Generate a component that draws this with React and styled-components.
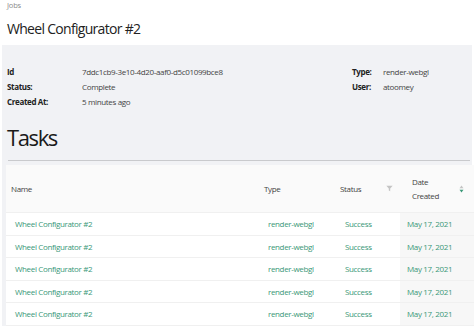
import React from "react";
import styled, { createGlobalStyle } from "styled-components";

const Global = createGlobalStyle`
  html, body { margin: 0; padding: 0; background: #fff; overflow: hidden; }
  body {
    font-family: "Open Sans", "Noto Sans", sans-serif;
    color: #333;
  }
`;

const Header = styled.header`
  padding: 0 7px;
  height: 45px;
  box-sizing: border-box;
`;
const Crumb = styled.div`
  font-size: 7.5px;
  line-height: 10px;
  letter-spacing: -0.2px;
  color: #8a8a8a;
`;
const Title = styled.h1`
  margin: 8px 0 0;
  font-size: 14px;
  font-weight: 400;
  letter-spacing: -0.7px;
  line-height: 22px;
  color: #222;
`;

const Panel = styled.main`
  margin: 0 2px;
  background: #f1f2f5;
  padding: 19px 0 0 4px;
  height: 281px;
  box-sizing: border-box;
`;

const Info = styled.div`
  display: grid;
  grid-template-columns: 345px auto;
  padding-left: 1px;
`;
const InfoGroup = styled.div`
  display: grid;
  grid-template-columns: ${(p) => p.label}px auto;
  grid-auto-rows: 15px;
  align-items: center;
  font-size: 8px;
  letter-spacing: -0.35px;
`;
const Label = styled.span`
  font-weight: 700;
  color: #222;
`;
const Value = styled.span`
  color: #444;
`;

const Tasks = styled.h2`
  margin: 11px 0 0 1px;
  font-size: 22px;
  letter-spacing: -1.4px;
  font-weight: 400;
  line-height: 34px;
  color: #1a1a1a;
`;
const Rule = styled.hr`
  margin: 6px 2px 0 2px;
  border: 0;
  border-top: 1px solid #c9cacd;
`;

const Card = styled.section`
  margin-top: 4px;
  background: #fff;
  margin-right: -2px;
  font-size: 8px;
  letter-spacing: -0.35px;
`;

const cols = "251px 78px 65px 1fr";

const HeadRow = styled.div`
  display: grid;
  grid-template-columns: ${cols};
  height: 48px;
  box-sizing: border-box;
  background: #fafafa;
  border-bottom: 1px solid #f0f0f0;
`;
const HeadCell = styled.div`
  display: flex;
  align-items: center;
  justify-content: space-between;
  padding-left: ${(p) => p.pad}px;
  padding-right: ${(p) => p.right || 0}px;
  line-height: 14px;
  color: #444;
`;
const Row = styled.div`
  display: grid;
  grid-template-columns: ${cols};
  height: 22.5px;
  box-sizing: border-box;
  border-bottom: 1px solid #f0f0f0;
`;
const Cell = styled.div`
  display: flex;
  align-items: center;
  padding-left: ${(p) => p.pad}px;
  color: #3a9878;
  white-space: nowrap;
  background: ${(p) => (p.sorted ? "#f7f7f7" : "transparent")};
`;

const Filter = () => (
  <svg width="7" height="7" viewBox="0 0 10 10">
    <path d="M0.5 1 H9.5 L6 5 V9 L4 8 V5 Z" fill="#c4c4c4" />
  </svg>
);
const Sort = () => (
  <svg width="5" height="8" viewBox="0 0 6 10">
    <path d="M3 0.5 L5.5 4 H0.5 Z" fill="#c4c4c4" />
    <path d="M3 9.5 L5.5 6 H0.5 Z" fill="#3a9878" />
  </svg>
);

const rows = Array.from({ length: 5 });

export default function App() {
  return (
    <>
      <Global />
      <Header>
        <Crumb>Jobs</Crumb>
        <Title>Wheel Configurator #2</Title>
      </Header>
      <Panel>
        <Info>
          <InfoGroup label={75}>
            <Label>Id</Label>
            <Value>7ddc1cb9-3e10-4d20-aaf0-d5c01099bce8</Value>
            <Label>Status:</Label>
            <Value>Complete</Value>
            <Label>Created At:</Label>
            <Value>5 minutes ago</Value>
          </InfoGroup>
          <InfoGroup label={31}>
            <Label>Type:</Label>
            <Value>render-webgl</Value>
            <Label>User:</Label>
            <Value>atoomey</Value>
          </InfoGroup>
        </Info>
        <Tasks>Tasks</Tasks>
        <Rule />
        <Card>
          <HeadRow>
            <HeadCell pad={5}>Name</HeadCell>
            <HeadCell pad={7}>Type</HeadCell>
            <HeadCell pad={5} right={7}>
              Status
              <Filter />
            </HeadCell>
            <HeadCell pad={12} right={10}>
              <span>
                Date
                <br />
                Created
              </span>
              <Sort />
            </HeadCell>
          </HeadRow>
          {rows.map((_, i) => (
            <Row key={i}>
              <Cell pad={9}>Wheel Configurator #2</Cell>
              <Cell pad={11}>render-webgl</Cell>
              <Cell pad={10}>Success</Cell>
              <Cell pad={7} sorted>
                May 17, 2021
              </Cell>
            </Row>
          ))}
        </Card>
      </Panel>
    </>
  );
}
